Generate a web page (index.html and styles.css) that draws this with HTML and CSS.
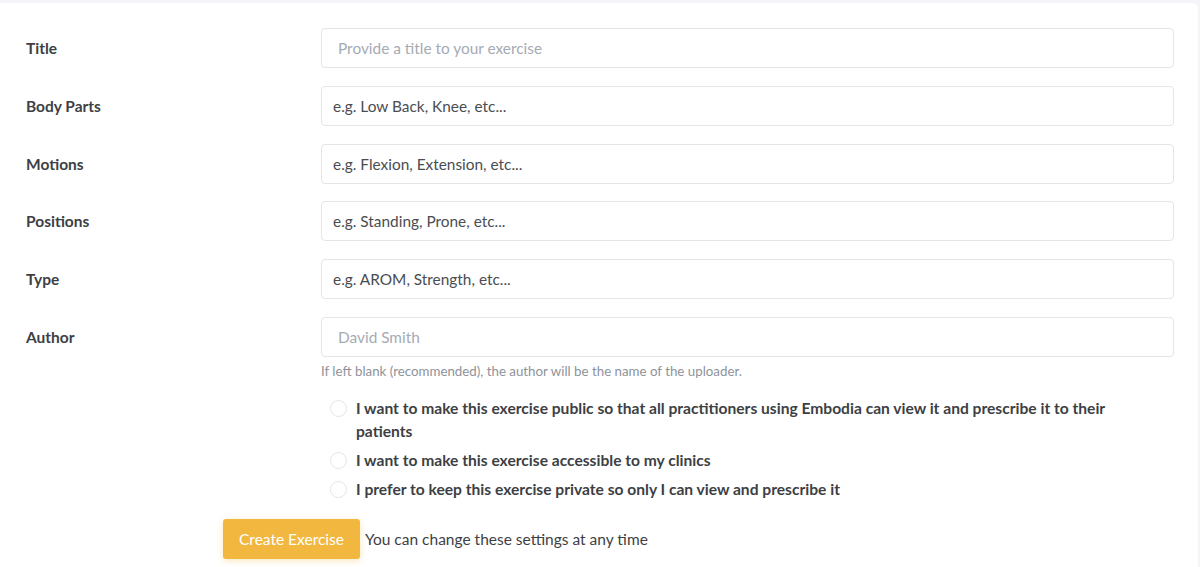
FILE: index.html
```html
<!DOCTYPE html>
<html>
<head>
<meta charset="utf-8">
<link rel="stylesheet" href="styles.css">
</head>
<body>
<div class="page">
  <div class="card">
    <div class="row"><label class="label">Title</label><div class="field"><input class="input" placeholder="Provide a title to your exercise"></div></div>
    <div class="row"><label class="label">Body Parts</label><div class="field"><input class="input dark" placeholder="e.g. Low Back, Knee, etc..."></div></div>
    <div class="row"><label class="label">Motions</label><div class="field"><input class="input dark" placeholder="e.g. Flexion, Extension, etc..."></div></div>
    <div class="row"><label class="label">Positions</label><div class="field"><input class="input dark" placeholder="e.g. Standing, Prone, etc..."></div></div>
    <div class="row"><label class="label">Type</label><div class="field"><input class="input dark" placeholder="e.g. AROM, Strength, etc..."></div></div>
    <div class="row"><label class="label">Author</label><div class="field"><input class="input" placeholder="David Smith"><div class="help">If left blank (recommended), the author will be the name of the uploader.</div></div></div>
    <div class="options">
      <label class="option"><span class="radio"></span><span class="opt-text">I want to make this exercise public so that all practitioners using Embodia can view it and prescribe it to their patients</span></label>
      <label class="option"><span class="radio"></span><span class="opt-text">I want to make this exercise accessible to my clinics</span></label>
      <label class="option"><span class="radio"></span><span class="opt-text">I prefer to keep this exercise private so only I can view and prescribe it</span></label>
    </div>
    <div class="actions">
      <button class="btn">Create Exercise</button>
      <span class="note">You can change these settings at any time</span>
    </div>
  </div>
</div>
</body>
</html>
```

FILE: styles.css
```css
html, body {
  margin: 0;
  padding: 0;
  background: #f4f5f9;
  font-family: "Lato", "Noto Sans", sans-serif;
}
.page {
  padding-top: 3px;
  height: 564px;
  overflow: hidden;
}
.card {
  background: #ffffff;
  border-top-right-radius: 6px;
  margin-right: 2px;
  padding: 25px 24px 0 26px;
  height: 600px;
}
.row {
  display: grid;
  grid-template-columns: 295px 1fr;
  margin-bottom: 17.8px;
}
.label {
  font-size: 15.5px;
  font-weight: 700;
  color: #3d3f44;
  line-height: 40px;
}
.field {
  display: flex;
  flex-direction: column;
}
.input {
  box-sizing: border-box;
  height: 40px;
  width: 100%;
  border: 1px solid #e3e5e9;
  border-radius: 4px;
  padding: 0 16px;
  font-family: inherit;
  font-size: 15.4px;
  outline: none;
  background: #fff;
}
.input.dark {
  padding-left: 11px;
}
.input::placeholder {
  color: #a5abb4;
}
.input.dark::placeholder {
  color: #4a4d52;
}
.help {
  margin-top: 7px;
  font-size: 13.3px;
  color: #8e939b;
  line-height: 15px;
}
.options {
  margin-top: 1px;
  padding-left: 304px;
  display: flex;
  flex-direction: column;
  gap: 6px;
}
.option {
  display: flex;
  align-items: flex-start;
  gap: 9px;
}
.radio {
  flex: none;
  box-sizing: border-box;
  width: 17px;
  height: 17px;
  border: 1px solid #e3e5e9;
  border-radius: 50%;
  margin-top: 3px;
}
.opt-text {
  font-size: 15.6px;
  font-weight: 700;
  color: #3d3f44;
  line-height: 23px;
  max-width: 770px;
}
.actions {
  margin-top: 18px;
  padding-left: 197px;
  display: flex;
  align-items: center;
  gap: 5px;
}
.btn {
  height: 40px;
  width: 137px;
  border: none;
  border-radius: 3px;
  background: #f1b73e;
  color: #ffffff;
  font-family: inherit;
  font-size: 15.5px;
  box-shadow: 0 2px 6px rgba(241, 183, 62, 0.35);
  padding: 0;
}
.note {
  font-size: 15.5px;
  color: #3d3f44;
}
```
